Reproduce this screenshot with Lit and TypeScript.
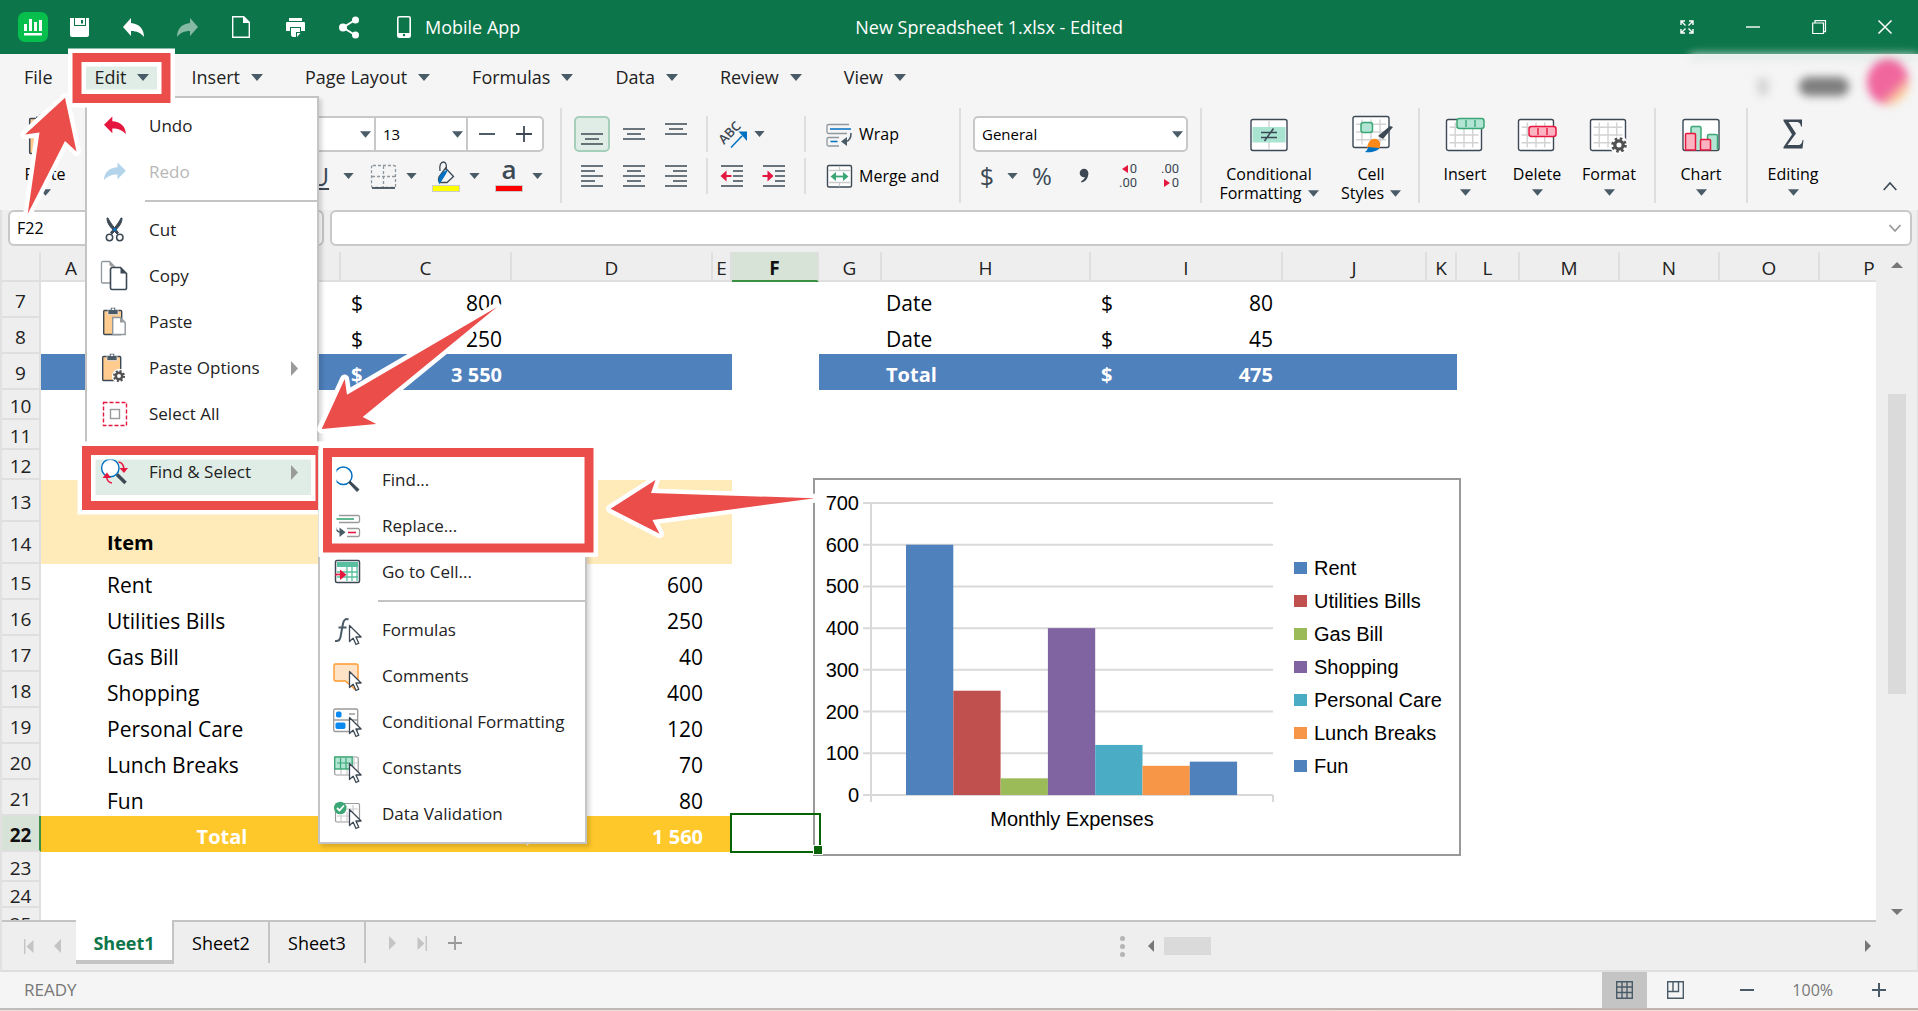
import { LitElement, html, svg, css, nothing } from "lit";
import { customElement, state } from "lit/decorators.js";
import { classMap } from "lit/directives/class-map.js";
import { styleMap } from "lit/directives/style-map.js";

const RED = "#e5173f";

const icon = (w: number, h: number, body: unknown) =>
  html`<svg class="ico" width=${w} height=${h} viewBox="0 0 ${w} ${h}" fill="none" aria-hidden="true">${body}</svg>`;

const caret = (w = 12, h = 7, fill = "#4a5b68") =>
  html`<svg class="caret" width=${w} height=${h} viewBox="0 0 12 7" aria-hidden="true"><path d="M0 0h12L6 7z" fill=${fill} /></svg>`;

const triangle = (dir: "l" | "r" | "u" | "d", fill: string, w: number, h: number) => {
  const d = { l: "M10 0v10L0 5z", r: "M0 0v10l10-5z", u: "M0 10h10L5 0z", d: "M0 0h10L5 10z" }[dir];
  return html`<svg width=${w} height=${h} viewBox="0 0 10 10" preserveAspectRatio="none" aria-hidden="true"><path d=${d} fill=${fill} /></svg>`;
};

const cursor = svg`<path transform="translate(16.5 9.5)" d="M0 0v16l3.6-3.4 2.9 6.4 2.8-1.3-2.9-6.2h5.2z" fill="#fff" stroke="#3c4954" stroke-width="1.3" stroke-linejoin="round"/>`;

const gear = (x: number, y: number, s = 1) => svg`<g transform="translate(${x} ${y}) scale(${s})">
  <circle r="8.4" fill="#fff"/>
  <circle r="5.6" stroke="#515151" stroke-width="3" stroke-dasharray="2.2 2.2"/>
  <circle r="3.8" stroke="#515151" stroke-width="3"/></g>`;

const bendLeft = (fill: string) => svg`<path d="M0 9 8 0v5c7 .5 13 5 13 14-3-4-7-6-13-6v5z" fill=${fill}/>`;
const bendRight = (fill: string) => svg`<path d="M21 9 13 0v5C6 5.500 0 10 0 19c3-4 7-6 13-6v5z" fill=${fill}/>`;

const grid = (x: number, y: number, w: number, h: number) => svg`
  <rect x=${x} y=${y} width=${w} height=${h} rx="2" fill="#fff" stroke="#3c4954" stroke-width="1.4"/>
  <path d="M${x + w / 4} ${y + 3}v${h - 6}M${x + w / 2} ${y + 3}v${h - 6}M${x + (w * 3) / 4} ${y + 3}v${h - 6}M${x + 3} ${y + h / 4}h${w - 6}M${x + 3} ${y + h / 2}h${w - 6}M${x + 3} ${y + (h * 3) / 4}h${w - 6}" stroke="#d2d2d2" stroke-width="1.4"/>`;

const lines = (spec: [number, number, number][]) =>
  svg`<path d=${spec.map(([x, y, w]) => `M${x} ${y}h${w}`).join("")} stroke="#3c4954" stroke-width="1.4"/>`;

const MENU_ICONS: Record<string, unknown> = {
  undo: svg`<g transform="translate(4 4.500) scale(1.04 .93)">${bendLeft(RED)}</g>`,
  redo: svg`<g transform="translate(4 4.500) scale(1.04 .93)">${bendRight("#b3d4ea")}</g>`,
  cut: svg`<path d="M7 2c0 5 2 8 10 16l1.500-1.500C12 9 10 6 8 2zM22 2c0 5-2 8-10 16l-1.500-1.500C17 9 19 6 21 2z" fill="#3c4954" stroke="#3c4954"/>
    <circle cx="9.500" cy="21.500" r="3.200" stroke="#3c4954" stroke-width="1.500"/><circle cx="19.800" cy="21.500" r="3.200" stroke="#3c4954" stroke-width="1.500"/><circle cx="14.600" cy="13.500" r="1.700" fill="#0070c0"/>`,
  copy: svg`<path d="M2.500 -.500h7l5 5V20a1 1 0 0 1-1 1h-11a1 1 0 0 1-1-1V.500z" stroke="#8f989f" stroke-width="1.300"/><path d="M9.500-.500v4l5 2z" fill="#9a9a9a"/>
    <path d="M11.500 5.500h9l6 6V26a1.500 1.500 0 0 1-1.500 1.500H12a1.500 1.500 0 0 1-1.500-1.500V7z" fill="#fff" stroke="#3c4954" stroke-width="1.600"/><path d="M20.500 5.500v6h6z" fill="#3c4954"/>`,
  paste: svg`<rect x="3.700" y="2.500" width="18" height="24" rx="1" fill="#ffcb8e" stroke="#3c4954" stroke-width="1.400"/>
    <path d="M8 1.500h2.500v-2h5v2H18v5H8z" fill="#4a5b68" stroke="#fff" stroke-width=".6"/><rect x="11.700" y=".5" width="2.600" height="1.500" fill="#fff"/>
    <path d="M12.700 9.500h7.500l5 5v12h-12.500z" fill="#fff" stroke="#8f989f" stroke-width="1.400"/><path d="M20 9.500v5h5z" fill="#9a9a9a"/>`,
  pasteOptions: svg`<rect x="2.700" y="2.500" width="18" height="24" rx="1" fill="#ffcb8e" stroke="#3c4954" stroke-width="1.400"/>
    <path d="M7 1.500h2.500v-2h5v2H17v5H7z" fill="#4a5b68" stroke="#fff" stroke-width=".6"/><rect x="10.700" y=".5" width="2.600" height="1.500" fill="#fff"/>${gear(19, 22, 0.85)}`,
  selectAll: svg`<rect x="3.500" y="2.500" width="23" height="23" stroke="#e5173f" stroke-width="1.400" stroke-dasharray="4 2"/><rect x="10.500" y="9.500" width="9" height="9" stroke="#9a9a9a" stroke-width="1.400"/>`,
  findSelect: svg`<circle cx="10.300" cy="10" r="8.700" fill="#fff" stroke="#0070c0" stroke-width="1.400"/><path d="M17 16.500l8.500 8.500" stroke="#3c4954" stroke-width="3.500"/>
    <path d="M18.500 4c3.500.500 5 3 5.300 6.500" stroke="#e5173f" stroke-width="1.500"/><path d="M19.500 10h8.500l-4 5z" fill="#e5173f"/>
    <path d="M12 25c-3.500-.500-5-3-5.300-6" stroke="#e5173f" stroke-width="1.500"/><path d="M2.500 20h8.500L7 14.500z" fill="#e5173f"/>`,
  find: svg`<circle cx="10.300" cy="9.800" r="8.700" fill="#fff" stroke="#0070c0" stroke-width="1.500"/><path d="M15.500 16.500l1.500-1.500 9 8.500-2 2z" fill="#3c4954" stroke="#3c4954"/>`,
  replace: svg`<path d="M6 3.500h19a1.500 1.500 0 0 1 1.500 1.500v4a1.500 1.500 0 0 1-1.500 1.500H6M14 16.500h11a1.500 1.500 0 0 1 1.500 1.500v5a1.500 1.500 0 0 1-1.500 1.500H14" stroke="#9a9a9a" stroke-width="1.300"/>
    <path d="M1 7h20" stroke="#3ba776" stroke-width="1.600"/><path d="M15 20.500h8" stroke="#e5173f" stroke-width="1.600"/>
    <path d="M2 12c0 5 2 8 6 8.500" stroke="#4a5b68" stroke-width="1.500"/><path d="M6.500 15.500v9.500l6-4.700z" fill="#4a5b68"/>`,
  goTo: svg`<rect x="2.500" y="2.500" width="24" height="22" rx="1.500" fill="#fff" stroke="#3c4954" stroke-width="1.500"/><rect x="4" y="4" width="21" height="5" fill="#58bfa0"/>
    <path d="M4 14h21M4 19h21M14 9v14M19 9v14M24 9v14" stroke="#58bfa0" stroke-width="1.300"/><path d="M2 16.500h6" stroke="#e5173f" stroke-width="1.700"/><path d="M7 11.500v10.500l6.500-5.200z" fill="#e5173f"/>`,
  formulas: svg`<path d="M15.500 3.500c-3-1.300-4.800.5-5.500 4L7.500 21c-.7 3.500-2.500 4.500-5.500 4M5.500 11.500h8" stroke="#4a5b68" stroke-width="2"/>${cursor}`,
  comments: svg`<path d="M2.500 2h21a1.500 1.500 0 0 1 1.500 1.500v14a1.500 1.500 0 0 1-1.500 1.500H22v8.500L12.500 19h-10A1.500 1.500 0 0 1 1 17.500v-14A1.500 1.500 0 0 1 2.500 2z" fill="#ffe3c6" stroke="#ff9a2e" stroke-width="1.400"/>${cursor}`,
  condFormat: svg`<rect x=".700" y="1" width="24" height="22.500" rx="1.500" fill="#fff" stroke="#9a9a9a" stroke-width="1.300"/><path d="M1 12h24M16 6h6" stroke="#9a9a9a" stroke-width="1.300"/><rect x="3" y="3.500" width="5.500" height="6" rx="1.800" fill="#0a8af0"/><rect x="2.500" y="14.500" width="10" height="6.500" rx="1.800" fill="#0a8af0"/>${cursor}`,
  constants: svg`<rect x="1.700" y="3" width="23.500" height="18" rx="1.500" fill="#fff" stroke="#9a9a9a" stroke-width="1.200"/><path d="M8 14v6M14 14v6M21 4v16M19 9h5" stroke="#ccc" stroke-width="1.200"/><rect x="1.700" y="3" width="17.500" height="12" fill="#b2e5d3" stroke="#3ba776" stroke-width="1.400"/><path d="M7.500 4v11M13 4v11M4 9h13" stroke="#3ba776" stroke-width="1.200"/>${cursor}`,
  validation: svg`<rect x="2.500" y="3.500" width="24" height="18.500" rx="1.500" fill="#fff" stroke="#9a9a9a" stroke-width="1.200"/><path d="M8 15v6M14 12v9M20 5v16M14 9h11M4 16h20" stroke="#ccc" stroke-width="1.200"/><circle cx="7.300" cy="8" r="6.300" fill="#3ba776"/><path d="M4 8l2.500 2.500L11 5.500" stroke="#fff" stroke-width="1.800"/>${cursor}`,
};

const RIBBON_ICONS: Record<string, unknown> = {
  paste: icon(40, 40, svg`<rect x="4.700" y="3.500" width="27" height="35" rx="1" fill="#ffcb8e" stroke="#3c4954" stroke-width="1.500"/><path d="M11 5V1.500h3.500v-2h7v2H25V7H11z" fill="#4a5b68"/><path d="M18 14h10l8 8v17H18z" fill="#fff" stroke="#8f989f" stroke-width="1.500"/>`),
  conditional: icon(40, 40, svg`<rect x="2" y="4.500" width="36" height="31" rx="2" fill="#fff" stroke="#3c4954" stroke-width="1.400"/><path d="M20 6v28" stroke="#d2d2d2" stroke-width="1.400"/><rect x="3.500" y="12" width="33" height="15.500" fill="#a9e4d0"/><path d="M12 17.500h16M12 22.500h16M24.500 13.500l-9 12.500" stroke="#3c4954" stroke-width="1.500"/>`),
  cellStyles: icon(44, 40, svg`${grid(4, 1.5, 36, 31)}<rect x="12" y="7.500" width="11.500" height="10" rx="2.500" fill="#b2e5d3" stroke="#3ba776" stroke-width="1.500"/><path d="M44 12 34 24l-5-3 12-10z" fill="#3c4954"/><path d="M18 33c1-7 5-10 9-9s5 5 3.500 9z" fill="#ff8a1a"/><path d="M16 37c2-1 2.500-3 3-5l11.500 1c-2 3-8 5-14.500 4z" fill="#0070c0"/>`),
  insert: icon(40, 40, svg`${grid(1.5, 4.5, 35, 31)}<rect x="12" y="3.500" width="27" height="10" rx="2.500" fill="#b2e5d3" stroke="#3ba776" stroke-width="1.500"/><path d="M21 5v7M30 5v7" stroke="#3ba776" stroke-width="1.400"/>`),
  remove: icon(40, 40, svg`${grid(1.5, 4.5, 35, 31)}<rect x="12" y="11.500" width="27" height="10" rx="2.500" fill="#fdb4c2" stroke="#e5173f" stroke-width="1.500"/><path d="M21 13v7M30 13v7" stroke="#e5173f" stroke-width="1.400"/>`),
  format: icon(40, 40, svg`${grid(1.5, 4.5, 35, 31)}${gear(30, 30, 1.1)}`),
  chart: icon(40, 40, svg`<rect x="2" y="4.500" width="36" height="31" rx="2" fill="#fff" stroke="#3c4954" stroke-width="1.400"/><path d="M10 34.500V13a1.500 1.500 0 0 1 1.500-1.500h7A1.500 1.500 0 0 1 20 13v21.500M26.500 34.500V21a1.500 1.500 0 0 1 1.500-1.500h7a1.500 1.500 0 0 1 1.500 1.500v13.500" fill="#b2e5d3" stroke="#3ba776" stroke-width="1.500"/><path d="M4.500 35V19.500a1 1 0 0 1 1-1h8a1 1 0 0 1 1 1V35zM19.500 35v-9.500a1 1 0 0 1 1-1h8a1 1 0 0 1 1 1V35z" fill="#fdb4c2" stroke="#e5173f" stroke-width="1.500"/>`),
  sigma: icon(40, 40, svg`<path d="M10.500 4.500H29v7h-1c-.5-3-1.500-4.500-4.500-4.500h-8l7.500 11.500L14.500 30H25c3 0 4-1.500 4.500-5h1l-1 8.500h-19V32L19 19.500 10.500 6z" fill="#3c4954"/>`),
};

const SMALL: Record<string, unknown> = {
  alignBottom: icon(28, 28, lines([[3, 14, 22], [7, 19, 14], [3, 24, 22]])),
  alignMiddle: icon(28, 28, lines([[3, 9, 22], [7, 14, 14], [3, 19, 22]])),
  alignTop: icon(28, 28, lines([[3, 4, 22], [7, 9, 14], [3, 14, 22]])),
  left: icon(28, 28, lines([[3, 4, 22], [3, 9, 14], [3, 14, 22], [3, 19, 14], [3, 24, 22]])),
  center: icon(28, 28, lines([[3, 4, 22], [7, 9, 14], [3, 14, 22], [7, 19, 14], [3, 24, 22]])),
  right: icon(28, 28, lines([[3, 4, 22], [11, 9, 14], [3, 14, 22], [11, 19, 14], [3, 24, 22]])),
  outdent: icon(28, 28, svg`${lines([[3, 4, 22], [15, 9, 10], [15, 14, 10], [15, 19, 10], [3, 24, 22]])}<path d="M2.500 14 8.500 8.500v11z" fill="#e5173f"/><path d="M8 14h5.500" stroke="#e5173f" stroke-width="2"/>`),
  indent: icon(28, 28, svg`${lines([[3, 4, 22], [15, 9, 10], [15, 14, 10], [15, 19, 10], [3, 24, 22]])}<path d="M13.500 14 7.500 8.500v11z" fill="#e5173f"/><path d="M2.500 14h5.500" stroke="#e5173f" stroke-width="2"/>`),
  orient: icon(34, 28, svg`<text transform="translate(10 25) rotate(-46)" font-family="Open Sans, sans-serif" font-weight="600" font-size="13" fill="#3c4954">ABC</text><path d="M17 27.500 28 16" stroke="#0070c0" stroke-width="1.500"/><path d="M24.500 11.500H33v9.500z" fill="#0070c0"/>`),
  wrap: icon(28, 28, svg`<path d="M24 4.500H3.500A1.500 1.500 0 0 0 2 6v6a1.500 1.500 0 0 0 1.500 1.500H22M14 17.500H3.500A1.500 1.500 0 0 0 2 19v5.500A1.500 1.500 0 0 0 3.500 26H14" stroke="#8f989f" stroke-width="1.300"/><path d="M5 9h21M5.500 21.500h7" stroke="#0070c0" stroke-width="1.600"/><path d="M26 13c0 5-2 8-5 8.500" stroke="#4a5b68" stroke-width="1.600"/><path d="M22 17v9l-6-4.500z" fill="#4a5b68"/>`),
  merge: icon(28, 28, svg`<rect x="2.500" y="3.500" width="24" height="21.500" rx="1.500" fill="#fff" stroke="#3c4954" stroke-width="1.400"/><path d="M4 8.500h21M4 20.500h21M14.500 4v4.500M14.500 20.500v4" stroke="#ccc" stroke-width="1.300"/><path d="M9 14.500h11" stroke="#3ba776" stroke-width="1.800"/><path d="M5.500 14.500 11 10v9zM23.500 14.500 18 10v9z" fill="#3ba776"/>`),
  borders: icon(28, 28, svg`<rect x="2.500" y="3.500" width="24" height="22" rx="1.500" stroke="#8f989f" stroke-width="1.300" stroke-dasharray="3 2"/><path d="M14.500 4v21M3 14.500h23" stroke="#8f989f" stroke-width="1.300" stroke-dasharray="3 2"/><path d="M3 26h23" stroke="#3c4954" stroke-width="1.700"/>`),
  fill: icon(28, 32, svg`<path d="M8 11c-1-6 1-9 3.500-9S15 5 14 10M7 17l6.500-9 8 8.500L15 22.500H8.500C6.500 22.500 6 19 7 17z" stroke="#3c4954" stroke-width="1.300"/><path d="M7.500 22.500c-1-5 1.500-9 7-11.500-1.500 4-4 7-7 11.500z" fill="#0070c0" stroke="#0070c0" stroke-width="1.500"/><rect x=".5" y="25.500" width="27" height="6" fill="#ff0" stroke="#ccc"/>`),
  fontColor: icon(28, 32, svg`<text x="14" y="19" text-anchor="middle" font-family="Open Sans, sans-serif" font-weight="600" font-size="26" fill="#3c4954">a</text><rect x=".5" y="25.500" width="27" height="6" fill="#f00" stroke="#ccc"/>`),
  underline: html`<span class="glyph under">U</span>`,
  dollar: html`<span class="glyph">$</span>`,
  percent: html`<span class="glyph thin">%</span>`,
  comma: icon(16, 24, svg`<circle cx="8" cy="9" r="4.300" fill="#3c4954"/><path d="M12.200 8.500c.5 5-2 9-6.700 10l-.5-1.300c2.500-1 4-2.800 4-5.200z" fill="#3c4954"/>`),
  decUp: html`<span class="dec"><span>${triangle("l", RED, 6, 8)}0</span><span>.00</span></span>`,
  decDown: html`<span class="dec"><span>.00</span><span>${triangle("r", RED, 6, 8)}0</span></span>`,
};

const TITLE_ICONS: [string, number, number, unknown][] = [
  ["Save", 19, 19, svg`<path d="M0 0h4v8h12V0h3v17a2 2 0 0 1-2 2H2a2 2 0 0 1-2-2z" fill="#fff"/><path d="M5 0h10v7H5zM11 2v3.500h2V2z" fill="#fff" fill-rule="evenodd"/>`],
  ["Undo", 21, 19, bendLeft("#fff")],
  ["Redo", 21, 19, svg`<g opacity=".5">${bendRight("#fff")}</g>`],
  ["New", 18, 22, svg`<path d="M.7.700h11l5.600 5.600v15H.7z" stroke="#fff" stroke-width="1.400"/><path d="M11 0v7h7z" fill="#fff"/>`],
  ["Print", 19, 19, svg`<path d="M3 3V0h13v3zM1 4h17a1 1 0 0 1 1 1v8h-4V9H4v4H0V5a1 1 0 0 1 1-1z" fill="#fff"/><path d="M5 10h9v4h-4v5H6.500L5 17.500zM11 19v-4h3.500z" fill="#fff" fill-rule="evenodd"/>`],
  ["Share", 20, 23, svg`<circle cx="4" cy="11.500" r="4" fill="#fff"/><circle cx="16.500" cy="4" r="3.500" fill="#fff"/><circle cx="16.500" cy="19" r="3.500" fill="#fff"/><path d="M16 4 4 11.500 16 19" stroke="#fff" stroke-width="2"/>`],
];

interface MenuItem { label?: string; icon?: string; sub?: boolean; active?: boolean; disabled?: boolean }
const EDIT_MENU: MenuItem[] = [
  { label: "Undo", icon: "undo" },
  { label: "Redo", icon: "redo", disabled: true },
  {},
  { label: "Cut", icon: "cut" },
  { label: "Copy", icon: "copy" },
  { label: "Paste", icon: "paste" },
  { label: "Paste Options", icon: "pasteOptions", sub: true },
  { label: "Select All", icon: "selectAll" },
  {},
  { label: "Find & Select", icon: "findSelect", sub: true, active: true },
];
const FIND_MENU: MenuItem[] = [
  { label: "Find...", icon: "find" },
  { label: "Replace...", icon: "replace" },
  { label: "Go to Cell...", icon: "goTo" },
  {},
  { label: "Formulas", icon: "formulas" },
  { label: "Comments", icon: "comments" },
  { label: "Conditional Formatting", icon: "condFormat" },
  { label: "Constants", icon: "constants" },
  { label: "Data Validation", icon: "validation" },
];

const COLUMNS: [string, number][] = [
  ["A", 62], ["B", 238], ["C", 171], ["D", 201], ["E", 19], ["F", 87], ["G", 63], ["H", 209],
  ["I", 192], ["J", 144], ["K", 30], ["L", 63], ["M", 100], ["N", 100], ["O", 100], ["P", 100],
];

type Cell = { text?: string; money?: string; plain?: string; center?: boolean };
interface Row { n: number; h: number; cells?: Record<string, Cell>; fill?: [string, string][]; bold?: boolean; middle?: boolean }
const item = (n: number, name: string, amount: string): Row => ({ n, h: 36, cells: { B: { text: name }, D: { plain: amount } } });
const ROWS: Row[] = [
  { n: 7, h: 36, cells: { C: { money: "800" }, H: { text: "Date" }, I: { money: "80" } } },
  { n: 8, h: 36, cells: { C: { money: "250" }, H: { text: "Date" }, I: { money: "45" } } },
  { n: 9, h: 36, bold: true, fill: [["ABCDE", "blue"], ["GHIJK", "blue"]], cells: { C: { money: "3 550" }, H: { text: "Total" }, I: { money: "475" } } },
  { n: 10, h: 30 },
  { n: 11, h: 30 },
  { n: 12, h: 30 },
  { n: 13, h: 42, fill: [["ABCDE", "cream"]] },
  { n: 14, h: 42, bold: true, middle: true, fill: [["ABCDE", "cream"]], cells: { B: { text: "Item" } } },
  item(15, "Rent", "600"),
  item(16, "Utilities Bills", "250"),
  item(17, "Gas Bill", "40"),
  item(18, "Shopping", "400"),
  item(19, "Personal Care", "120"),
  item(20, "Lunch Breaks", "70"),
  item(21, "Fun", "80"),
  { n: 22, h: 36, bold: true, fill: [["ABCDE", "gold"]], cells: { B: { text: "Total", center: true }, D: { money: "1 560" } } },
  { n: 23, h: 30 },
  { n: 24, h: 24 },
  { n: 25, h: 30 },
];

const SERIES: [string, number, string][] = [
  ["Rent", 600, "#4f81bd"],
  ["Utilities Bills", 250, "#c0504d"],
  ["Gas Bill", 40, "#9bbb59"],
  ["Shopping", 400, "#8064a2"],
  ["Personal Care", 120, "#4bacc6"],
  ["Lunch Breaks", 70, "#f79646"],
  ["Fun", 80, "#4f81bd"],
];

@customElement("expense-chart")
class ExpenseChart extends LitElement {
  static styles = css`
    :host { display: flex; align-items: center; box-sizing: border-box; width: 648px; height: 378px; background: #fff; border: 2px solid #999; font: 20px/24px "Liberation Sans", Arial, sans-serif; color: #000; }
    ul { list-style: none; margin: 0 0 0 12px; padding: 0; display: grid; }
    li { display: flex; align-items: center; gap: 7px; height: 33px; white-space: nowrap; }
    .swatch { width: 13px; height: 12px; }
    text { fill: #000; }
  `;
  render() {
    const top = 23;
    const bottom = 315;
    const y = (v: number) => bottom - (v / 700) * (bottom - top);
    const ticks = [0, 100, 200, 300, 400, 500, 600, 700];
    return html`
      <svg width="467" height="374" viewBox="0 0 467 374" role="img" aria-label="Monthly Expenses">
        ${ticks.map((t) => svg`<path d="M48 ${y(t)}H458" stroke="#d9d9d9" stroke-width="2"/><text x="44" y=${y(t) + 7} text-anchor="end">${t}</text>`)}
        <path d="M56 23v299M458 315v7" stroke="#d9d9d9" stroke-width="2" />
        ${SERIES.map(([, v, c], i) => svg`<rect x=${91 + i * 47.3} y=${y(v)} width="47.3" height=${bottom - y(v)} fill=${c}/>`)}
        <text x="257" y="346" text-anchor="middle">Monthly Expenses</text>
      </svg>
      <ul>
        ${SERIES.map(([n, , c]) => html`<li><span class="swatch" style=${styleMap({ background: c })}></span>${n}</li>`)}
      </ul>
    `;
  }
}

@customElement("app-root")
class AppRoot extends LitElement {
  @state() private sheet = "Sheet1";

  static styles = css`
    :host { display: flex; flex-direction: column; position: relative; height: 100vh; overflow: hidden; background: #f5f5f5; color: #1c1c1c; font: 16px/20px "Open Sans", "Noto Sans", sans-serif; }
    * { box-sizing: border-box; }
    button { font: inherit; color: inherit; background: none; border: 0; padding: 0; margin: 0; display: inline-flex; align-items: center; justify-content: center; white-space: nowrap; }
    input, select { font: inherit; color: #000; background: none; border: 0; margin: 0; outline: 0; appearance: none; min-width: 0; }
    svg { flex: none; display: block; }
    .ico { overflow: visible; }

    .title { display: flex; align-items: center; flex: none; height: 54px; background: #0c7549; color: #fff; font-size: 18px; }
    .quick { display: flex; align-items: center; padding-left: 18px; gap: 8px; }
    .quick button { width: 46px; height: 38px; }
    .logo { display: grid; place-items: center; width: 30px; height: 30px; border-radius: 7px; background: #06bf4d; }
    .quick .mobile { width: auto; gap: 14px; margin-left: 17px; }
    .name { flex: 1; text-align: center; padding-right: 196px; white-space: nowrap; }
    .window { display: flex; }
    .window button { width: 66px; height: 54px; }

    .tabs { display: flex; align-items: center; flex: none; height: 46px; padding-left: 14px; font-size: 18px; }
    .tabs button { height: 32px; padding: 0 10px; margin-right: 22px; gap: 11px; color: #222; }
    .tabs .open { background: #e0ede6; }
    .account { display: flex; align-items: center; margin-left: auto; height: 46px; padding: 4px 9px 0 0; border-top: 6px solid #dfeae4; filter: blur(4px); width: 228px; justify-content: flex-end; }
    .smudge { width: 50px; height: 19px; border-radius: 9px; background: #7e7e7e; margin: 8px 18px 0 30px; }
    .smudge.faint { width: 12px; background: #d4d4d4; margin: 8px 0 0; }
    .avatar { width: 42px; height: 46px; border-radius: 50%; background: linear-gradient(135deg, #f0679e 60%, #fbd9a0 80%); }

    .tools { display: flex; flex: none; gap: 12px; height: 110px; padding: 8px 0 7px 20px; }
    .rule { flex: none; width: 2px; background: #dedede; }
    .split { display: flex; flex: none; flex-direction: column; gap: 6px; padding: 8px 0; }
    .split i { width: 2px; height: 36px; background: #dedede; }
    .split.snug { margin-right: -6px; }
    .stack { display: flex; flex: none; flex-direction: column; gap: 6px; padding-top: 8px; }
    .line { display: flex; gap: 6px; height: 36px; align-items: center; }
    .font { margin-left: 118px; margin-right: 4px; width: 344px; }
    .font .line:last-child { justify-content: flex-end; gap: 15px; padding-right: 1px; }
    .combo { display: flex; align-items: stretch; height: 36px; border: 2px solid #c8c8c8; border-radius: 5px; background: #fff; color: #000; font-size: 15px; }
    .pick { display: grid; align-items: center; border-right: 2px solid #c8c8c8; width: 92px; }
    .pick:first-child { flex: 1; width: auto; }
    .pick > * { grid-area: 1 / 1; }
    .pick select { height: 32px; padding: 0 7px; width: 100%; }
    .pick .caret { justify-self: end; margin-right: 3px; pointer-events: none; }
    .combo button { width: 37px; }
    .number .pick { flex: 1; border: 0; }
    .number { width: 215px; }
    .sq { width: 36px; height: 36px; border-radius: 5px; }
    .sq.on { background: #e0ede6; border: 2px solid #a6cfbb; }
    .drop { height: 36px; gap: 9px; }
    .drop.tight { gap: 6px; }
    .glyph { display: inline-block; width: 28px; font-size: 25px; line-height: 28px; color: #3c4954; text-align: center; }
    .under { text-decoration: underline; }
    .thin { font-size: 24px; }
    .dec { display: grid; width: 22px; font: 13px/14px Roboto, sans-serif; color: #3c4954; }
    .dec span { display: flex; align-items: center; justify-content: flex-end; gap: 2px; height: 14px; }
    .wide { gap: 6px; height: 36px; padding-left: 7px; justify-content: flex-start; color: #000; width: 129px; }
    .big { flex: none; flex-direction: column; justify-content: flex-start; width: 66px; padding-top: 7px; color: #000; line-height: 19px; }
    .big .text { margin-top: 10px; }
    .big .text span { display: flex; align-items: center; justify-content: center; gap: 6px; }
    .big > .caret { margin-top: 5px; }
    .big.w50 { width: 50px; } .big.w70 { width: 70px; } .big.w110 { width: 110px; }
    .three { display: flex; gap: 6px; }
    .collapse { margin-left: auto; padding: 0 21px 12px 0; align-items: flex-end; }

    .body { display: flex; flex-direction: column; flex: 1; min-height: 0; background: #eee; border-left: 2px solid #e1e1e1; border-right: 1px solid #e1e1e1; }
    .formula { display: flex; flex: none; gap: 6px; height: 42px; padding: 0 5px 6px 6px; }
    .box { display: flex; align-items: center; height: 36px; border: 2px solid #c8c8c8; border-radius: 6px; background: #fff; padding: 0 9px 0 7px; }
    .box input { width: 100%; padding: 0; }
    .box.cellref { width: 316px; }
    .box.fx { flex: 1; }

    .view { display: flex; flex: 1; min-height: 0; }
    .canvas { position: relative; flex: 1; min-width: 0; overflow: hidden; background: #fff; border-bottom: 2px solid #c4c4c4; margin-bottom: -2px; z-index: 1; }
    table { table-layout: fixed; width: 1px; border-collapse: separate; border-spacing: 0; font-size: 21px; line-height: 24px; color: #000; }
    th { font-size: 19px; font-weight: 400; line-height: 20px; padding: 4px 0 0; background: #eee; color: #222; border-right: 2px solid #dfdfdf; border-bottom: 2px solid #dfdfdf; }
    th.sel { background: #d8e3d8; font-weight: 700; color: #111; }
    thead th.sel { border-bottom-color: #3b8f43; }
    tbody th.sel { border-right-color: #3b8f43; }
    td { padding: 0 4px 3px; vertical-align: bottom; white-space: nowrap; }
    .middle td { vertical-align: middle; padding-bottom: 0; }
    .bold td { font-weight: 700; font-size: 20px; }
    td.blue, td.gold { color: #fff; }
    td.blue { background: #4f81bd; } td.cream { background: #ffebb9; } td.gold { background: #ffc82a; }
    td.num { padding-left: 10px; padding-right: 10px; text-align: right; }
    td.mid { text-align: center; }
    .money { display: flex; justify-content: space-between; }
    .chart { position: absolute; left: 811px; top: 226px; }
    .picked { position: absolute; left: 728px; top: 561px; width: 91px; height: 40px; border: 2px solid #066306; }
    .picked::after { content: ""; position: absolute; right: -4px; bottom: -4px; width: 8px; height: 8px; background: #066306; border: 1px solid #fff; }
    .vbar { display: flex; flex-direction: column; align-items: center; flex: none; width: 41px; padding: 10px 0 5px 1px; }
    .vbar .thumb { width: 18px; height: 300px; background: #dadada; margin: 126px 0 auto; }

    .sheets { display: flex; flex: none; height: 52px; border-bottom: 2px solid #dedede; padding-top: 2px; font-size: 18px; color: #000; }
    .nav { display: flex; align-items: center; gap: 20px; width: 74px; padding-left: 22px; }
    .nav.after { width: auto; padding-left: 23px; gap: 21px; padding-bottom: 6px; }
    .sheet { height: 41px; width: 96px; border-right: 2px solid #c4c4c4; }
    .sheet.on { position: relative; z-index: 2; height: 44px; width: 98px; margin-top: -2px; padding-top: 6px; background: #fff; color: #0c7549; font-weight: 700; border-bottom: 4px solid #c4c4c4; }
    .hbar { display: flex; align-items: center; margin-left: auto; width: 797px; padding-right: 46px; }
    .hbar .thumb { width: 47px; height: 18px; background: #dadada; margin: 0 auto 0 10px; }
    .dots { display: grid; gap: 3px; margin-right: 23px; }
    .dots i { width: 5px; height: 5px; border-radius: 50%; background: #b4b4b4; }

    .status { display: flex; align-items: center; flex: none; height: 36px; padding-left: 24px; color: #777; font-size: 17px; }
    .status button { height: 36px; width: 45px; }
    .status .on { background: #c4c4c4; }
    .modes { display: flex; margin-left: auto; gap: 6px; margin-right: 26px; }
    .zoom { display: flex; align-items: center; gap: 23px; margin-right: 17px; font-size: 16px; }
    .foot { flex: none; height: 3px; background: linear-gradient(90deg, #bdbdbd, #c2b2ac); border-bottom: 1px solid #efdcd3; }

    .menu { position: absolute; z-index: 5; display: flex; flex-direction: column; background: #fff; border: 2px solid #c4c4c4; box-shadow: 3px 3px 4px rgba(0, 0, 0, 0.15); padding: 5px 0; font-size: 17px; }
    .menu button { height: 46px; justify-content: flex-start; padding: 0 19px 0 13px; gap: 21px; color: #222; }
    .menu button:disabled { color: #b8b8b8; }
    .menu .active { background: #e0ede6; }
    .menu .arrow { margin-left: auto; }
    .menu hr { width: calc(100% - 58px); height: 2px; margin: 5px 0 5px 58px; border: 0; background: #c4c4c4; }
    .edit { left: 85px; top: 96px; width: 234px; }
    .find { left: 318px; top: 450px; width: 269px; z-index: 7; }
    .marks { position: absolute; inset: 0; width: 100%; height: 100%; pointer-events: none; z-index: 6; }
    .marks.top { z-index: 8; }
  `;

  private menu(cls: string, label: string, items: MenuItem[]) {
    return html`<div class="menu ${cls}" role="menu" aria-label=${label}>
      ${items.map((m) =>
        m.label
          ? html`<button role="menuitem" class=${classMap({ active: !!m.active })} ?disabled=${!!m.disabled}>
              ${icon(28, 28, MENU_ICONS[m.icon!])}<span>${m.label}</span>
              ${m.sub ? html`<span class="arrow">${triangle("r", "#9a9a9a", 7, 15)}</span>` : nothing}
            </button>`
          : html`<hr />`
      )}
    </div>`;
  }

  private sq(label: string, key: string, on = false) {
    return html`<button class=${classMap({ sq: true, on })} aria-label=${label}>${SMALL[key]}</button>`;
  }

  private drop(label: string, key: string, tight = false) {
    return html`<button class=${classMap({ drop: true, tight })} aria-label=${label}>${SMALL[key]}${caret(11, 6)}</button>`;
  }

  private big(label: string, key: string, cls = "") {
    return html`<button class="big ${cls}">${RIBBON_ICONS[key]}<span class="text">${label}</span>${caret(11, 7)}</button>`;
  }

  private bigTwo(a: string, b: string, key: string, cls: string) {
    return html`<button class="big ${cls}">${RIBBON_ICONS[key]}<span class="text"><span>${a}</span><span>${b} ${caret(11, 7)}</span></span></button>`;
  }

  private cell(col: string, row: Row) {
    const c = row.cells?.[col];
    const fill = row.fill?.find(([cols]) => cols.includes(col))?.[1] ?? "";
    const cls = { num: !!(c?.money || c?.plain), mid: !!c?.center, ...(fill ? { [fill]: true } : {}) };
    return html`<td class=${classMap(cls)}>${c?.money ? html`<span class="money"><span>$</span><span>${c.money}</span></span>` : c?.text ?? c?.plain ?? nothing}</td>`;
  }

  private frame(x: number, y: number, w: number, h: number) {
    return svg`<rect x=${x} y=${y} width=${w} height=${h} fill="none" stroke="#fff" stroke-width="18"/>
      <rect x=${x} y=${y} width=${w} height=${h} fill="none" stroke="#eb4d4b" stroke-width="9"/>`;
  }

  private arrow(d: string) {
    return svg`<path d=${d} fill="none" stroke="#fff" stroke-width="9" stroke-linejoin="round"/><path d=${d} fill="#eb4d4b"/>`;
  }

  render() {
    return html`
      <header class="title">
        <div class="quick">
          <span class="logo">${icon(20, 20, svg`<path d="M1 7h3v7H1zM6 2h3v12H6zM11 5h3v9h-3zM16 3h3v11h-3zM1 16h18v2.500H1z" fill="#fff"/>`)}</span>
          ${TITLE_ICONS.map(([n, w, h, b]) => html`<button aria-label=${n}>${icon(w, h, b)}</button>`)}
          <button class="mobile">${icon(14, 22, svg`<rect x=".8" y=".8" width="12.400" height="20.400" rx="1.500" stroke="#fff" stroke-width="1.600"/><path d="M1 17h12v4H1z" fill="#fff"/><circle cx="7" cy="19" r="1.200" fill="#0c7549"/>`)}Mobile App</button>
        </div>
        <div class="name">New Spreadsheet 1.xlsx - Edited</div>
        <div class="window">
          <button aria-label="Full screen">${icon(14, 14, svg`<path d="M1 5V1h4M9 1h4v4M13 9v4H9M5 13H1V9M1 1l4.500 4.500M13 1 8.500 5.500M13 13 8.500 8.500M1 13l4.500-4.500" stroke="#fff" stroke-width="1.400"/>`)}</button>
          <button aria-label="Minimize">${icon(14, 14, svg`<path d="M0 7h14" stroke="#fff" stroke-width="1.400"/>`)}</button>
          <button aria-label="Restore">${icon(14, 14, svg`<path d="M.7 3h10.800v10.500H.7zM3 3V.700h10.500v11h-2" stroke="#fff" stroke-width="1.200"/>`)}</button>
          <button aria-label="Close">${icon(14, 14, svg`<path d="M.5.500l13 13M13.500.500l-13 13" stroke="#fff" stroke-width="1.500"/>`)}</button>
        </div>
      </header>

      <nav class="tabs">
        <button>File</button>
        ${["Edit", "Insert", "Page Layout", "Formulas", "Data", "Review", "View"].map(
          (t) => html`<button class=${classMap({ open: t === "Edit" })} aria-haspopup="menu">${t}${caret(12, 7)}</button>`
        )}
        <div class="account"><span class="smudge faint"></span><span class="smudge"></span><span class="avatar"></span></div>
      </nav>

      <section class="tools" aria-label="Ribbon">
        ${this.big("Paste", "paste", "w50")}
        <div class="stack font">
          <div class="combo">
            <label class="pick"><select aria-label="Font"></select>${caret(11, 7)}</label>
            <label class="pick"><select aria-label="Font size"><option>13</option></select>${caret(11, 7)}</label>
            <button aria-label="Decrease size">${icon(16, 16, svg`<path d="M0 8h16" stroke="#3c4954" stroke-width="1.800"/>`)}</button>
            <button aria-label="Increase size">${icon(16, 16, svg`<path d="M0 8h16M8 0v16" stroke="#3c4954" stroke-width="1.800"/>`)}</button>
          </div>
          <div class="line">
            ${this.drop("Underline", "underline")}${this.drop("Borders", "borders")}${this.drop("Fill color", "fill")}${this.drop("Font color", "fontColor")}
          </div>
        </div>
        <div class="rule"></div>
        <div class="stack">
          <div class="line">${this.sq("Align bottom", "alignBottom", true)}${this.sq("Align middle", "alignMiddle")}${this.sq("Align top", "alignTop")}</div>
          <div class="line">${this.sq("Align left", "left")}${this.sq("Center", "center")}${this.sq("Align right", "right")}</div>
        </div>
        <div class="split snug"><i></i><i></i></div>
        <div class="stack">
          <div class="line">${this.drop("Orientation", "orient", true)}</div>
          <div class="line">${this.sq("Decrease indent", "outdent")}${this.sq("Increase indent", "indent")}</div>
        </div>
        <div class="split"><i></i><i></i></div>
        <div class="stack">
          <button class="wide">${SMALL.wrap}Wrap</button>
          <button class="wide">${SMALL.merge}Merge and</button>
        </div>
        <div class="rule"></div>
        <div class="stack number">
          <div class="combo"><label class="pick"><select aria-label="Number format"><option>General</option></select>${caret(11, 7)}</label></div>
          <div class="line">
            ${this.drop("Currency", "dollar", true)}${this.sq("Percent", "percent")}${this.sq("Comma style", "comma")}${this.sq("Increase decimals", "decUp")}${this.sq("Decrease decimals", "decDown")}
          </div>
        </div>
        <div class="rule"></div>
        ${this.bigTwo("Conditional", "Formatting", "conditional", "w110")} ${this.bigTwo("Cell", "Styles", "cellStyles", "w70")}
        <div class="rule"></div>
        <div class="three">${this.big("Insert", "insert")}${this.big("Delete", "remove")}${this.big("Format", "format")}</div>
        <div class="rule"></div>
        ${this.big("Chart", "chart")}
        <div class="rule"></div>
        ${this.big("Editing", "sigma")}
        <button class="collapse" aria-label="Collapse ribbon">${icon(14, 9, svg`<path d="M.7 8 7 1l6.300 7" stroke="#3c4954" stroke-width="1.600"/>`)}</button>
      </section>

      <main class="body">
        <div class="formula">
          <div class="box cellref"><input aria-label="Cell reference" .value=${"F22"} /></div>
          <div class="box fx"><input aria-label="Formula" /><button aria-label="Expand">${icon(12, 8, svg`<path d="M.5 1 6 7l5.500-6" stroke="#999" stroke-width="1.800"/>`)}</button></div>
        </div>
        <div class="view">
          <div class="canvas">
            <table>
              <colgroup><col style=${styleMap({ width: "39px" })} />${COLUMNS.map(([, w]) => html`<col style=${styleMap({ width: `${w}px` })} />`)}</colgroup>
              <thead><tr style=${styleMap({ height: "30px" })}><th></th>${COLUMNS.map(([c]) => html`<th scope="col" class=${classMap({ sel: c === "F" })}>${c}</th>`)}</tr></thead>
              <tbody>
                ${ROWS.map((r) => html`<tr class=${classMap({ bold: !!r.bold, middle: !!r.middle })} style=${styleMap({ height: `${r.h}px` })}>
                  <th scope="row" class=${classMap({ sel: r.n === 22 })}>${r.n}</th>${COLUMNS.map(([c]) => this.cell(c, r))}
                </tr>`)}
              </tbody>
            </table>
            <expense-chart class="chart"></expense-chart>
            <div class="picked"></div>
          </div>
          <div class="vbar">${triangle("u", "#777", 12, 6)}<div class="thumb"></div>${triangle("d", "#777", 12, 6)}</div>
        </div>
        <div class="sheets">
          <div class="nav">
            <button aria-label="First sheet">${icon(10, 15, svg`<path d="M.7 0v15" stroke="#c4c4c4" stroke-width="1.400"/><path d="M9.500 1v13L2.500 7.500z" fill="#c4c4c4"/>`)}</button>
            <button aria-label="Previous sheet">${triangle("l", "#c4c4c4", 7, 14)}</button>
          </div>
          ${["Sheet1", "Sheet2", "Sheet3"].map((s) => html`<button class=${classMap({ sheet: true, on: s === this.sheet })} @click=${() => (this.sheet = s)}>${s}</button>`)}
          <div class="nav after">
            <button aria-label="Next sheet">${triangle("r", "#c4c4c4", 7, 14)}</button>
            <button aria-label="Last sheet">${icon(10, 15, svg`<path d="M9.300 0v15" stroke="#c4c4c4" stroke-width="1.400"/><path d="M.5 1v13l7-6.500z" fill="#c4c4c4"/>`)}</button>
            <button aria-label="Add sheet">${icon(14, 14, svg`<path d="M0 7h14M7 0v14" stroke="#999" stroke-width="1.800"/>`)}</button>
          </div>
          <div class="hbar"><span class="dots"><i></i><i></i><i></i></span>${triangle("l", "#777", 6, 12)}<div class="thumb"></div>${triangle("r", "#777", 6, 12)}</div>
        </div>
      </main>

      <footer class="status">
        <span>READY</span>
        <div class="modes">
          <button class="on" aria-label="Normal view">${icon(17, 18, svg`<path d="M.7.700h15.600v16.600H.7zM6 1v16M11 1v16M1 6h15M1 11.500h15" stroke="#4a5b68" stroke-width="1.400"/>`)}</button>
          <button aria-label="Page view">${icon(17, 18, svg`<path d="M.7.700h15.600v16.600H.7zM6 1v9.500M11.500 1v9.500H1" stroke="#4a5b68" stroke-width="1.400"/>`)}</button>
        </div>
        <div class="zoom">
          <button aria-label="Zoom out">${icon(14, 14, svg`<path d="M0 7h14" stroke="#4a5b68" stroke-width="2"/>`)}</button>
          <span>100%</span>
          <button aria-label="Zoom in">${icon(14, 14, svg`<path d="M0 7h14M7 0v14" stroke="#4a5b68" stroke-width="2"/>`)}</button>
        </div>
      </footer>
      <div class="foot"></div>

      ${this.menu("edit", "Edit", EDIT_MENU)}
      <svg class="marks" aria-hidden="true">
        <g>${this.frame(77, 57.5, 89, 41)}</g>
        <g>${this.frame(86.5, 450.5, 233.5, 55)}</g>
      </svg>
      ${this.menu("find", "Find & Select", FIND_MENU)}
      <svg class="marks top" aria-hidden="true">
        ${this.frame(327.5, 452.5, 261.5, 95.5)}
        ${this.arrow("M27.700 214 39.500 132.500 25 134.500 65 97.700 76.500 151.500 65 141z")}
        ${this.arrow("M497 307 347 394.700 344.700 379 321.700 429 376.300 424 362.700 417z")}
        ${this.arrow("M814.700 498.300 651 493 655.500 480 610.600 508.700 659.600 533.700 652.400 520z")}
      </svg>
    `;
  }
}
